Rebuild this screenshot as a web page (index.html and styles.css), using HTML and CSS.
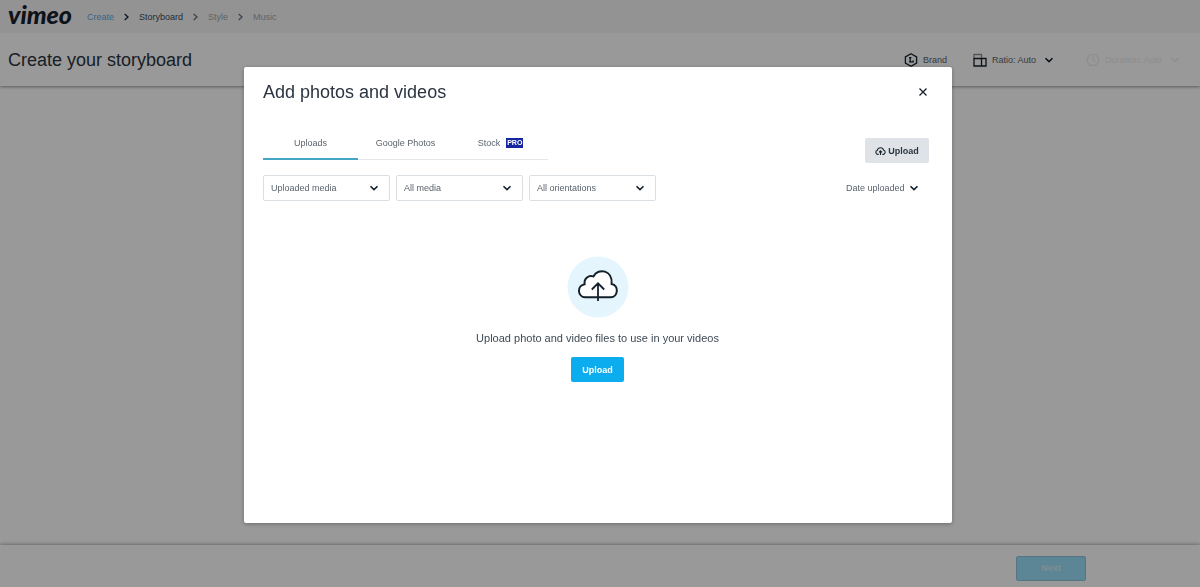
FILE: index.html
```
<!DOCTYPE html>
<html lang="en">
    <head>
        <title>Create your storyboard</title>
        <meta charset="UTF-8">
        <meta name="viewport" content="width=device-width, initial-scale=1.0">
        <link rel="stylesheet" href="styles.css">
    </head>
    <body>
        <div class="page">
            <div class="topbar">
                <a href="#" class="logo">vimeo</a>
                <nav class="steps">
                    <a href="#" class="done">Create</a>
                    <svg class="sep dark" viewBox="0 0 5 8"><path d="M.7 1l3.300 3L.7 7"/></svg>
                    <span class="current">Storyboard</span>
                    <svg class="sep" viewBox="0 0 5 8"><path d="M.7 1l3.300 3L.7 7"/></svg>
                    <span>Style</span>
                    <svg class="sep" viewBox="0 0 5 8"><path d="M.7 1l3.300 3L.7 7"/></svg>
                    <span>Music</span>
                </nav>
            </div>

            <header class="header">
                <h1>Create your storyboard</h1>
                <div class="tools">
                    <button type="button" class="tool brand">
                        <svg width="14" height="14" viewBox="0 0 14 14"><path d="M7 .8l5.600 3.100v6.200L7 13.200l-5.600-3.100V3.900z"/><path d="M5 4.600h2.400M6.200 4.600v4.200M5 8.900h4.200V7.400"/></svg>
                        Brand
                    </button>
                    <button type="button" class="tool ratio">
                        <svg width="14" height="14" viewBox="0 0 14 14"><path class="faint" d="M1 5.500V1.500h7.500v4"/><path d="M1 5.500h12v7.500H1zM8.500 5.500V13"/></svg>
                        Ratio: Auto
                        <svg class="chevron" viewBox="0 0 10 6"><path d="M1.500 1.200L5 4.600l3.500-3.400"/></svg>
                    </button>
                    <button type="button" class="tool duration" disabled>
                        <svg width="14" height="14" viewBox="0 0 14 14"><circle cx="7" cy="7" r="5.700"/><path d="M7 3.500V7l2.500 2"/></svg>
                        Duration: Auto
                        <svg class="chevron" viewBox="0 0 10 6"><path d="M1.500 1.200L5 4.600l3.500-3.400"/></svg>
                    </button>
                </div>
            </header>

            <main class="content"></main>

            <footer class="footer">
                <button type="button" class="next" disabled>Next</button>
            </footer>
        </div>

        <div class="overlay">
            <div class="modal" role="dialog" aria-labelledby="modalTitle">
                <div class="modal-head">
                    <h2 id="modalTitle">Add photos and videos</h2>
                    <button type="button" class="close" aria-label="Close">
                        <svg width="10" height="10" viewBox="0 0 10 10"><path d="M1.500 1.500l7 7M8.500 1.500l-7 7"/></svg>
                    </button>
                </div>

                <div class="tab-row">
                    <div class="tabs" role="tablist">
                        <button type="button" role="tab" class="tab active" aria-selected="true">Uploads</button>
                        <button type="button" role="tab" class="tab">Google Photos</button>
                        <button type="button" role="tab" class="tab">Stock <span class="pro">PRO</span></button>
                    </div>
                    <button type="button" class="upload-small">
                        <svg width="11" height="10" viewBox="0 0 11 10"><path d="M3.700 8.400H2.800a2.100 2.100 0 0 1-.5-4.100 3.300 3.300 0 0 1 6.400 0 2.100 2.100 0 0 1-.5 4.100h-.9M5.500 9V5M4 6.300L5.500 4.800 7 6.300"/></svg>
                        Upload
                    </button>
                </div>

                <div class="filters">
                    <div class="field">
                        <select aria-label="Source"><option>Uploaded media</option></select>
                        <svg class="chevron" viewBox="0 0 10 6"><path d="M1.500 1.200L5 4.600l3.500-3.400"/></svg>
                    </div>
                    <div class="field">
                        <select aria-label="Media type"><option>All media</option></select>
                        <svg class="chevron" viewBox="0 0 10 6"><path d="M1.500 1.200L5 4.600l3.500-3.400"/></svg>
                    </div>
                    <div class="field">
                        <select aria-label="Orientation"><option>All orientations</option></select>
                        <svg class="chevron" viewBox="0 0 10 6"><path d="M1.500 1.200L5 4.600l3.500-3.400"/></svg>
                    </div>
                    <div class="field sort">
                        <select aria-label="Sort by"><option>Date uploaded</option></select>
                        <svg class="chevron" viewBox="0 0 10 6"><path d="M1.500 1.200L5 4.600l3.500-3.400"/></svg>
                    </div>
                </div>

                <div class="empty">
                    <svg class="cloud" width="62" height="62" viewBox="0 0 62 62">
                        <circle class="disc" cx="31" cy="31" r="30.500"/>
                        <path class="shape" d="M18 41.300a6.600 6.600 0 0 1-.4-13.100c-.8-6 4.200-9.500 8.800-7.800C31.500 11.300 46 14.200 44.600 27.900c7.600 1.300 6.700 13.200-1 13.400z"/>
                        <path class="arrow" d="M31 45V27.500M24.800 33.500l6.200-6.200 6.200 6.200"/>
                    </svg>
                    <p>Upload photo and video files to use in your videos</p>
                    <button type="button" class="upload">Upload</button>
                </div>
            </div>
        </div>
    </body>
</html>
```
FILE: styles.css
```
* {
    box-sizing: border-box;
}
body {
    margin: 0;
    background: white;
    color: #3f4a55;
    font-family: "Liberation Sans", Arial, sans-serif;
    font-size: 9px;
}
button, select {
    margin: 0;
    padding: 0;
    border: 0;
    background: none;
    color: inherit;
    font: inherit;
    cursor: pointer;
}
h1, h2, p {
    margin: 0;
    font-weight: normal;
}
a {
    text-decoration: none;
}
svg {
    flex: none;
    fill: none;
    stroke: #14202c;
    stroke-width: 1.3;
}
.chevron {
    width: 10px;
    height: 6px;
    stroke-width: 1.6;
}

/* page behind the dialog */
.page {
    display: flex;
    flex-direction: column;
    min-height: 100vh;
}
.topbar {
    position: relative;
    z-index: 1;
    display: flex;
    align-items: center;
    height: 33px;
    padding: 0 8px;
    background: #f6f6f6;
}
.logo {
    width: 79px;
    margin-top: -6px;
    color: #16202e;
    font-family: Lato, sans-serif;
    font-size: 25px;
    font-style: italic;
    font-weight: 900;
    line-height: 28px;
}
.steps {
    display: flex;
    align-items: center;
    gap: 10px;
    color: #a0a5aa;
}
.done {
    color: #5fa8dc;
}
.current {
    color: #3f4a55;
}
.sep {
    width: 5px;
    height: 8px;
    stroke: #6a7078;
}
.sep.dark {
    stroke: #16202e;
}
.header {
    display: flex;
    align-items: center;
    justify-content: space-between;
    height: 53px;
    padding: 0 20px 0 8px;
    box-shadow: 0 1px 3px rgba(0, 0, 0, 0.4);
}
h1, h2 {
    color: #2b3440;
    font-size: 18px;
    line-height: 22px;
}
.tools {
    display: flex;
    gap: 26px;
}
.tool {
    display: flex;
    align-items: center;
    gap: 5px;
    color: #5a636c;
}
.tool .chevron {
    margin-left: 3px;
}
.tool .faint {
    stroke: #8a9299;
}
.duration {
    margin-left: 6px;
    color: #ececec;
}
.duration svg {
    stroke: #ececec;
}
.content {
    flex: 1;
}
.footer {
    display: flex;
    align-items: center;
    justify-content: flex-end;
    height: 42px;
    padding: 4px 114px 0 0;
    box-shadow: 0 -1px 3px rgba(0, 0, 0, 0.3);
}
.next {
    width: 70px;
    height: 25px;
    border: 1px solid #8fc4d8;
    border-radius: 2px;
    background: #99e0fb;
    color: #d5e9f2;
    font-weight: bold;
}

/* dialog */
.overlay {
    position: fixed;
    top: 0;
    right: 0;
    bottom: 0;
    left: 0;
    z-index: 2;
    display: flex;
    justify-content: center;
    padding: 67px 4px 64px 0;
    background: rgba(0, 0, 0, 0.4);
}
.modal {
    display: flex;
    flex-direction: column;
    width: 59vw;
    padding: 14px 23px 0 19px;
    border-radius: 2px;
    background: white;
    box-shadow: 0 1px 4px rgba(0, 0, 0, 0.3);
}
.modal-head, .tab-row {
    display: flex;
    align-items: center;
    justify-content: space-between;
}
.close {
    width: 12px;
    height: 12px;
    line-height: 0;
}
.tab-row {
    align-items: flex-start;
    margin-top: 24px;
}
.tabs {
    display: flex;
    border-bottom: 1px solid #e3e7ea;
}
.tab {
    display: flex;
    align-items: center;
    justify-content: center;
    gap: 6px;
    width: 95px;
    height: 33px;
    margin-bottom: -1px;
    border-bottom: 2px solid transparent;
    color: #5a636c;
}
.tab.active {
    border-bottom-color: #45a5c4;
}
.pro {
    padding: 0 1px;
    background: #1527a0;
    color: white;
    font-size: 7px;
    font-weight: bold;
    line-height: 10px;
}
.upload-small {
    display: flex;
    align-items: center;
    justify-content: center;
    gap: 2px;
    width: 64px;
    height: 25px;
    margin-top: 11px;
    border-radius: 2px;
    background: #dfe3e7;
    color: #2b3440;
    font-weight: bold;
}
.upload-small svg {
    stroke-width: 1.1;
}
.filters {
    display: flex;
    gap: 6px;
    margin-top: 12px;
}
.field {
    display: grid;
    align-items: center;
    width: 127px;
    color: #5a636c;
}
.field select, .field .chevron {
    grid-area: 1 / 1;
}
.field select {
    width: 100%;
    height: 26px;
    padding: 0 20px 0 7px;
    border: 1px solid #dadfe3;
    border-radius: 2px;
    appearance: none;
}
.field .chevron {
    justify-self: end;
    margin-right: 11px;
    pointer-events: none;
}
.field.sort {
    width: auto;
    margin-left: auto;
}
.field.sort .chevron {
    margin-right: 10px;
}
.sort select {
    padding-right: 23px;
    border-color: transparent;
}
.empty {
    display: flex;
    flex-direction: column;
    align-items: center;
    margin-top: 55px;
    padding-left: 3px;
}
.disc {
    fill: #e5f5fd;
    stroke: none;
}
.shape {
    fill: white;
    stroke-width: 2;
}
.arrow {
    stroke-width: 1.8;
}
.empty p {
    margin: 13px 0 12px;
    font-size: 11px;
    line-height: 14px;
}
.upload {
    width: 53px;
    height: 25px;
    border-radius: 2px;
    background: #0badee;
    color: white;
    font-weight: bold;
}
```
